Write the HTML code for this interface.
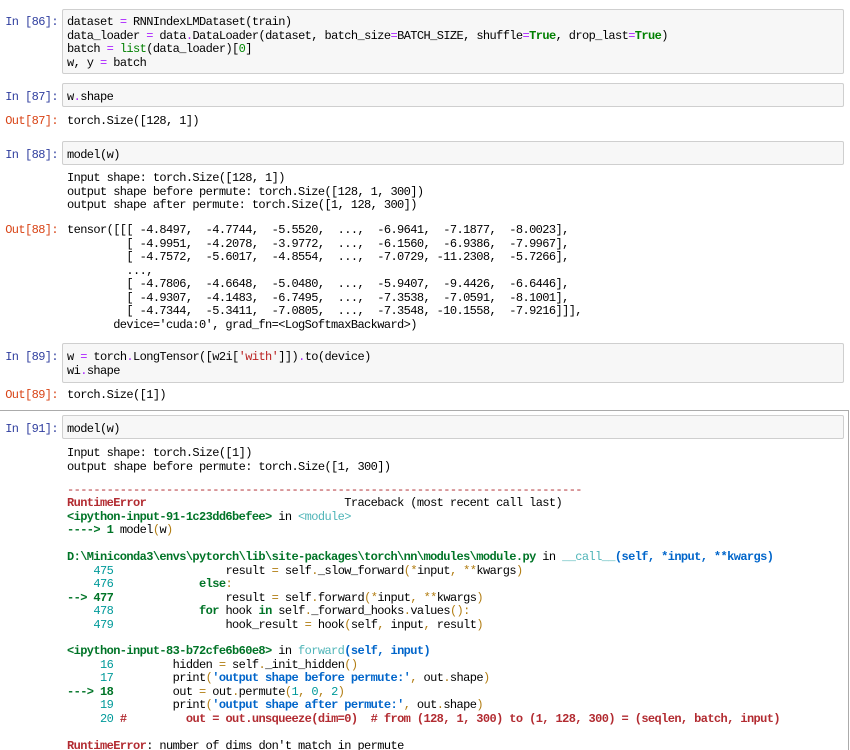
<!DOCTYPE html>
<html><head><meta charset="utf-8">
<style>
html,body{margin:0;padding:0;background:#fff;width:850px;height:750px;overflow:hidden;position:relative}
pre{margin:0;position:absolute;font-family:"Liberation Mono",monospace;font-size:12px;letter-spacing:-0.6px;line-height:13.6px;color:#000;white-space:pre}
.p{left:4px;width:54px;text-align:right}
.in{color:#303f9f}
.out{color:#d84315}
.box{position:absolute;left:62px;width:782px;background:#f7f7f7;border:1px solid #cfcfcf;border-radius:2px;box-sizing:border-box}
.c{left:67px}
.o{color:#aa22ff}
.k{color:#008000;font-weight:bold}
.b{color:#008000}
.n{color:#008800}
.s{color:#ba2121}
.r{color:#b22b31;font-weight:bold}
.rn{color:#b22b31}
.g{color:#007427;font-weight:bold}
.gn{color:#009a9a}
.cy{color:#4fb5b8}
.bl{color:#0065ca;font-weight:bold}
.y{color:#b27d12}
.tb{line-height:13.45px}
</style></head><body>

<div class="box" style="top:9px;height:65px"></div>
<pre class="p in" style="top:16px">In [86]:</pre>
<pre class="c" style="top:16px">dataset <span class="o">=</span> RNNIndexLMDataset(train)
data_loader <span class="o">=</span> data<span class="o">.</span>DataLoader(dataset, batch_size<span class="o">=</span>BATCH_SIZE, shuffle<span class="o">=</span><span class="k">True</span>, drop_last<span class="o">=</span><span class="k">True</span>)
batch <span class="o">=</span> <span class="b">list</span>(data_loader)[<span class="n">0</span>]
w, y <span class="o">=</span> batch</pre>

<div class="box" style="top:83px;height:24px"></div>
<pre class="p in" style="top:91px">In [87]:</pre>
<pre class="c" style="top:91px">w<span class="o">.</span>shape</pre>
<pre class="p out" style="top:115px">Out[87]:</pre>
<pre class="c" style="top:115px">torch.Size([128, 1])</pre>

<div class="box" style="top:141px;height:24px"></div>
<pre class="p in" style="top:149px">In [88]:</pre>
<pre class="c" style="top:149px">model(w)</pre>
<pre class="c" style="top:172px">Input shape: torch.Size([128, 1])
output shape before permute: torch.Size([128, 1, 300])
output shape after permute: torch.Size([1, 128, 300])</pre>

<pre class="p out" style="top:224px;line-height:13.57px">Out[88]:</pre>
<pre class="c" style="top:224px;line-height:13.57px">tensor([[[ -4.8497,  -4.7744,  -5.5520,  ...,  -6.9641,  -7.1877,  -8.0023],
         [ -4.9951,  -4.2078,  -3.9772,  ...,  -6.1560,  -6.9386,  -7.9967],
         [ -4.7572,  -5.6017,  -4.8554,  ...,  -7.0729, -11.2308,  -5.7266],
         ...,
         [ -4.7806,  -4.6648,  -5.0480,  ...,  -5.9407,  -9.4426,  -6.6446],
         [ -4.9307,  -4.1483,  -6.7495,  ...,  -7.3538,  -7.0591,  -8.1001],
         [ -4.7344,  -5.3411,  -7.0805,  ...,  -7.3548, -10.1558,  -7.9216]]],
       device='cuda:0', grad_fn=&lt;LogSoftmaxBackward&gt;)</pre>

<div class="box" style="top:343px;height:40px"></div>
<pre class="p in" style="top:351px">In [89]:</pre>
<pre class="c" style="top:351px">w <span class="o">=</span> torch<span class="o">.</span>LongTensor([w2i[<span class="s">'with'</span>]])<span class="o">.</span>to(device)
wi<span class="o">.</span>shape</pre>
<pre class="p out" style="top:389px">Out[89]:</pre>
<pre class="c" style="top:389px">torch.Size([1])</pre>

<div style="position:absolute;left:-1px;top:410px;width:850px;height:350px;border:1px solid #ababab;box-sizing:border-box"></div>
<div class="box" style="top:415px;height:24px"></div>
<pre class="p in" style="top:423px">In [91]:</pre>
<pre class="c" style="top:423px">model(w)</pre>
<pre class="c" style="top:447px">Input shape: torch.Size([1])
output shape before permute: torch.Size([1, 300])</pre>

<pre class="c tb" style="top:484px"><span class="rn">------------------------------------------------------------------------------</span>
<span class="r">RuntimeError</span>                              Traceback (most recent call last)
<span class="g">&lt;ipython-input-91-1c23dd6befee&gt;</span> in <span class="cy">&lt;module&gt;</span>
<span class="g">----&gt; 1</span> model<span class="y">(</span>w<span class="y">)</span>

<span class="g">D:\Miniconda3\envs\pytorch\lib\site-packages\torch\nn\modules\module.py</span> in <span class="cy">__call__</span><span class="bl">(self, *input, **kwargs)</span>
<span class="gn">    475</span>                 result <span class="y">=</span> self<span class="y">.</span>_slow_forward<span class="y">(</span><span class="y">*</span>input<span class="y">,</span> <span class="y">**</span>kwargs<span class="y">)</span>
<span class="gn">    476</span>             <span class="g">else</span><span class="y">:</span>
<span class="g">--&gt; 477</span>                 result <span class="y">=</span> self<span class="y">.</span>forward<span class="y">(</span><span class="y">*</span>input<span class="y">,</span> <span class="y">**</span>kwargs<span class="y">)</span>
<span class="gn">    478</span>             <span class="g">for</span> hook <span class="g">in</span> self<span class="y">.</span>_forward_hooks<span class="y">.</span>values<span class="y">():</span>
<span class="gn">    479</span>                 hook_result <span class="y">=</span> hook<span class="y">(</span>self<span class="y">,</span> input<span class="y">,</span> result<span class="y">)</span>

<span class="g">&lt;ipython-input-83-b72cfe6b60e8&gt;</span> in <span class="cy">forward</span><span class="bl">(self, input)</span>
<span class="gn">     16</span>         hidden <span class="y">=</span> self<span class="y">.</span>_init_hidden<span class="y">()</span>
<span class="gn">     17</span>         print<span class="y">(</span><span class="bl">'output shape before permute:'</span><span class="y">,</span> out<span class="y">.</span>shape<span class="y">)</span>
<span class="g">---&gt; 18</span>         out <span class="y">=</span> out<span class="y">.</span>permute<span class="y">(</span><span class="gn">1</span><span class="y">,</span> <span class="gn">0</span><span class="y">,</span> <span class="gn">2</span><span class="y">)</span>
<span class="gn">     19</span>         print<span class="y">(</span><span class="bl">'output shape after permute:'</span><span class="y">,</span> out<span class="y">.</span>shape<span class="y">)</span>
<span class="gn">     20</span> <span class="r">#         out = out.unsqueeze(dim=0)  # from (128, 1, 300) to (1, 128, 300) = (seqlen, batch, input)</span>

<span class="r">RuntimeError</span>: number of dims don't match in permute</pre>
</body></html>
